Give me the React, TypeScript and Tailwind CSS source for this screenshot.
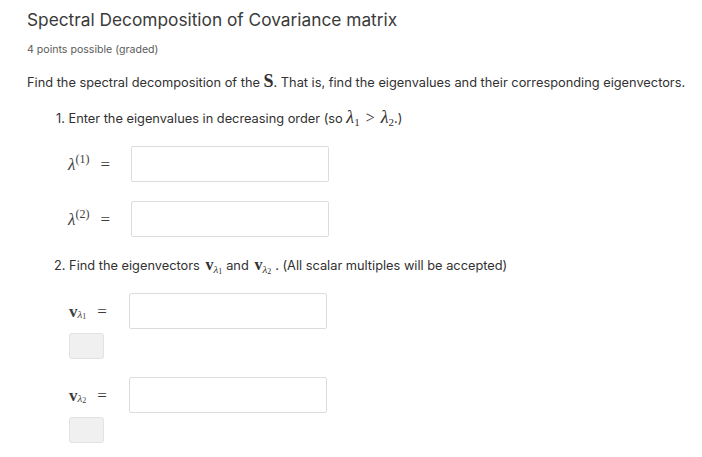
import React from "react";

const serif = "font-['Liberation_Serif','DejaVu_Serif',serif]";

function Lam({ sub }: { sub: string }) {
  return (
    <span className={`${serif} text-[18px] leading-none`}>
      <span className="italic">λ</span>
      <span className="relative top-[3px] text-[11px]">{sub}</span>
    </span>
  );
}

function Vec({ sub }: { sub: string }) {
  return (
    <span className={`${serif} text-[16px] leading-none ml-[2px] mr-[4px]`}>
      <span className="font-bold">v</span>
      <span className="relative top-[3px] text-[11px] italic">
        λ<span className="relative top-[1px] not-italic text-[8px]">{sub}</span>
      </span>
    </span>
  );
}

function ValueRow({ n }: { n: string }) {
  return (
    <div className="flex items-center h-9">
      <div className={`${serif} w-[63px] text-[17px] text-[#3d3d3d] flex items-center leading-none`}>
        <span className="italic">λ</span>
        <span className="relative -top-[5px] text-[12px]">({n})</span>
        <span className="ml-[11px] text-[17px]">=</span>
      </div>
      <div className="w-[198px] h-9 border border-[#dcdcdc] rounded-[2px] bg-white" />
    </div>
  );
}

function VectorRow({ n }: { n: string }) {
  return (
    <div className="flex flex-col">
      <div className="flex items-center h-[36px]">
        <div className={`${serif} w-[60px] text-[17px] text-[#3d3d3d] flex items-center leading-none`}>
          <span className="font-bold">v</span>
          <span className="relative top-[3px] text-[11px] italic">
            λ<span className="relative top-[1px] not-italic text-[8px]">{n}</span>
          </span>
          <span className="ml-[11px] text-[17px]">=</span>
        </div>
        <div className="w-[198px] h-9 border border-[#dcdcdc] rounded-[2px] bg-white" />
      </div>
      <div className="mt-[4px] w-[35px] h-[26px] rounded-[3px] bg-[#f0f0f0] border border-[#e2e2e2]" />
    </div>
  );
}

export default function App() {
  return (
    <div className="min-h-screen bg-white text-[#313131] font-['Inter','Open_Sans',sans-serif] pl-[27px] pt-[8px]">
      <h2 className="text-[17.3px] leading-[24px] font-normal text-[#3a3a3a]">
        Spectral Decomposition of Covariance matrix
      </h2>
      <div className="mt-[10px] text-[10.6px] leading-[16px] text-[#5b5b5b]">4 points possible (graded)</div>
      <p className="mt-[14px] text-[12.8px] leading-[20px]">
        Find the spectral decomposition of the{" "}
        <span className={`${serif} font-bold text-[18px] leading-none`}>S</span>. That is, find the eigenvalues and
        their corresponding eigenvectors.
      </p>
      <div className="pl-[29px] mt-[15px] text-[12.8px] leading-[20px]">
        <p>
          1. Enter the eigenvalues in decreasing order (so <Lam sub="1" />
          <span className={`${serif} text-[16px] leading-none mx-[6px]`}>&gt;</span>
          <Lam sub="2" />
          .)
        </p>
        <div className="mt-[17px] ml-[12px] flex flex-col gap-[19px]">
          <ValueRow n="1" />
          <ValueRow n="2" />
        </div>
        <p className="mt-[19px] -ml-[2px]">
          2. Find the eigenvectors <Vec sub="1" />
          and <Vec sub="2" />. (All scalar multiples will be accepted)
        </p>
        <div className="mt-[17px] ml-[13px] flex flex-col gap-[18px]">
          <VectorRow n="1" />
          <VectorRow n="2" />
        </div>
      </div>
    </div>
  );
}
